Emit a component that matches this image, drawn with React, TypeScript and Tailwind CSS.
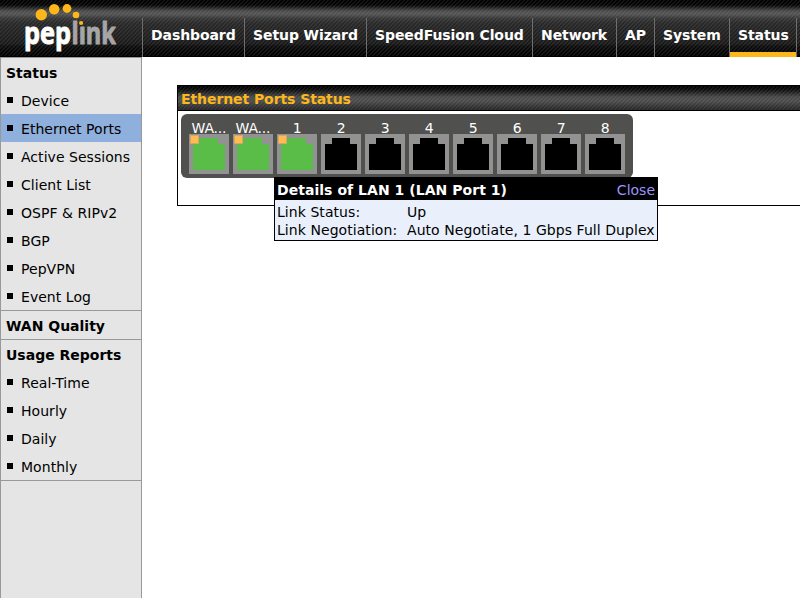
const navItems = [
  { label: 'Dashboard', width: 'w-[102px]' },
  { label: 'Setup Wizard', width: 'w-[122px]' },
  { label: 'SpeedFusion Cloud', width: 'w-[166px]' },
  { label: 'Network', width: 'w-[84px]' },
  { label: 'AP', width: 'w-[38px]' },
  { label: 'System', width: 'w-[75px]' },
  { label: 'Status', width: 'w-[68px]', active: true },
];

const sections = [
  {
    title: 'Status',
    items: [
      'Device',
      'Ethernet Ports',
      'Active Sessions',
      'Client List',
      'OSPF & RIPv2',
      'BGP',
      'PepVPN',
      'Event Log',
    ],
  },
  { title: 'WAN Quality', items: [] },
  { title: 'Usage Reports', items: ['Real-Time', 'Hourly', 'Daily', 'Monthly'] },
];

const ports = [
  { label: 'WA...', up: true },
  { label: 'WA...', up: true },
  { label: '1', up: true },
  { label: '2', up: false },
  { label: '3', up: false },
  { label: '4', up: false },
  { label: '5', up: false },
  { label: '6', up: false },
  { label: '7', up: false },
  { label: '8', up: false },
];

function Logo() {
  return (
    <svg width="142" height="57" viewBox="0 0 142 57" className="shrink-0">
      <g fontFamily="'Open Sans', sans-serif" fontSize="31" fontWeight="700" strokeWidth="1" strokeLinejoin="round">
        <text transform="translate(24 45.2) scale(0.815 1)" fill="#fff" stroke="#fff">
          pep
        </text>
        <text transform="translate(71.5 45.2) scale(0.76 1)" fill="#a6a6a6" stroke="#a6a6a6">
          lınk
        </text>
      </g>
      <g fill="#fdb71a">
        <circle cx="41.3" cy="15.8" r="5.7" />
        <circle cx="54.2" cy="10.3" r="5.2" />
        <circle cx="67" cy="9.5" r="4.4" />
        <circle cx="76" cy="16" r="3.3" />
        <circle cx="81.1" cy="24" r="2.1" />
      </g>
    </svg>
  );
}

function Header() {
  return (
    <header className="flex h-[57px] items-end border-b border-black bg-[repeating-linear-gradient(135deg,#ffffff12_0px,#ffffff12_1px,transparent_1px,transparent_2.828px),linear-gradient(#000_0px,#040404_5px,#4a4a4a_11px,#545454_14px,#383838_18px,#282828_23px,#1a1a1a_44px,#0e0e0e_46px,#000_56px)]">
      <Logo />
      <nav className="-mb-px flex h-[39px]">
        {navItems.map((item) => (
          <a
            key={item.label}
            className={`${item.width} border-l border-[#6e6e6e] pl-2 pt-[7px] text-sm font-bold tracking-[-0.09px] whitespace-nowrap text-white ${
              item.active ? 'border-r bg-[linear-gradient(#fdb71a,#fdb71a)] bg-[length:100%_5px] bg-bottom bg-no-repeat' : ''
            }`}
          >
            {item.label}
          </a>
        ))}
      </nav>
    </header>
  );
}

function Sidebar() {
  return (
    <aside className="w-[142px] shrink-0 border-x border-t border-[#999] bg-[#e5e5e5]">
      {sections.map((section) => (
        <div key={section.title} className="border-b border-[#999]">
          <h2 className="h-7 pl-[5px] pt-px text-sm leading-7 font-bold">{section.title}</h2>
          {section.items.map((item) => (
            <a
              key={item}
              className={`flex h-7 items-center gap-2 pl-1.5 text-sm tracking-[0.04px] whitespace-nowrap ${
                item === 'Ethernet Ports' ? 'bg-[#8fafdc]' : ''
              }`}
            >
              <span className="size-1.5 shrink-0 bg-black" />
              <span className="pt-0.5">{item}</span>
            </a>
          ))}
        </div>
      ))}
    </aside>
  );
}

function Port({ label, up }: { label: string; up: boolean }) {
  return (
    <div className="flex w-10 flex-col items-center">
      <span className="h-5 pt-1 text-sm tracking-[-0.2px] text-white">{label}</span>
      <svg width="40" height="40" shapeRendering="crispEdges">
        <rect width="40" height="40" fill="#929292" />
        {up ? (
          <>
            <path d="M4 4H29V10H36V36H4Z" fill="#59bd48" />
            <rect width="10" height="10" fill="#929292" />
            <rect x="1" y="1" width="9" height="9" fill="#d4a566" />
            <rect x="2" y="2" width="7" height="7" fill="#ffbc53" />
          </>
        ) : (
          <path d="M11 4H29V10H36V36H4V10H11Z" fill="#000" />
        )}
      </svg>
    </div>
  );
}

function PortDetails() {
  return (
    <div className="absolute top-[91px] left-[96px] h-16 w-[384px] border border-black bg-[#e9f0fc] text-sm whitespace-nowrap">
      <div className="flex h-[22px] items-center justify-between bg-black px-0.5 pt-0.5 font-bold text-white">
        <span className="tracking-[0.04px]">Details of LAN 1 (LAN Port 1)</span>
        <a className="font-normal text-[#9b93ff]">Close</a>
      </div>
      <dl className="grid grid-cols-[130px_1fr] px-0.5 pt-[3px] leading-[18px] tracking-[0.06px]">
        <dt>Link Status:</dt>
        <dd>Up</dd>
        <dt>Link Negotiation:</dt>
        <dd>Auto Negotiate, 1 Gbps Full Duplex</dd>
      </dl>
    </div>
  );
}

export default function App() {
  return (
    <div className="flex h-[598px] w-[800px] flex-col overflow-hidden bg-white font-['DejaVu_Sans',Verdana,sans-serif] text-black">
      <Header />
      <div className="flex flex-1">
        <Sidebar />
        <main className="flex-1 pt-7 pl-[35px]">
          <section className="relative h-[121px] border border-r-0 border-black">
            <h1 className="h-[25px] border-b border-black bg-[repeating-linear-gradient(135deg,#ffffff12_0px,#ffffff12_1px,transparent_1px,transparent_2.828px),linear-gradient(#000_0px,#080808_3px,#484848_11px,#4c4c4c_15px,#282828_23px)] pl-[3px] pt-[3px] text-sm font-bold tracking-[-0.08px] text-[#fdb71a]">
              Ethernet Ports Status
            </h1>
            <div className="mt-[3px] ml-[3px] flex h-16 w-[452px] gap-1 rounded-md bg-[#50504e] pl-2">
              {ports.map((port, i) => (
                <Port key={i} label={port.label} up={port.up} />
              ))}
            </div>
            <PortDetails />
          </section>
        </main>
      </div>
    </div>
  );
}
